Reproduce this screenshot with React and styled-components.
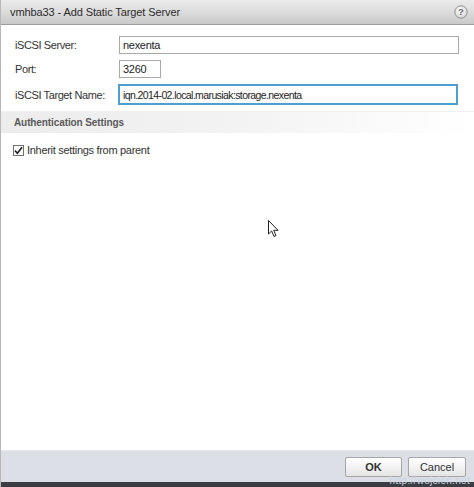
import React from "react";
import styled, { createGlobalStyle } from "styled-components";

const GlobalStyle = createGlobalStyle`
	html, body {
		margin: 0;
		padding: 0;
		background: #ffffff;
	}
	body {
		font-family: "Liberation Sans", Arial, sans-serif;
		font-size: 11px;
		color: #333333;
	}
`;

const Dialog = styled.div`
	position: relative;
	width: 474px;
	height: 487px;
	display: flex;
	flex-direction: column;
	box-sizing: border-box;
	border-left: 1px solid #b8b8b8;
	overflow: hidden;
`;

const TitleBar = styled.div`
	height: 24px;
	display: flex;
	align-items: center;
	justify-content: space-between;
	padding: 0 6px 0 9px;
	background: linear-gradient( to bottom, #ebebeb 0%, #dcdcdc 50%, #c9c9c9 100% );
	border-bottom: 1px solid #9c9c9c;
	flex-shrink: 0;
`;

const Title = styled.span`
	font-size: 11px;
	color: #2b2b2b;
	letter-spacing: -0.1px;
`;

const Body = styled.div`
	flex: 1;
	display: flex;
	flex-direction: column;
	padding-top: 11px;
`;

const Form = styled.div`
	display: grid;
	grid-template-columns: 103px 1fr;
	row-gap: 6px;
	align-items: center;
	padding: 0 16px 0 14px;
`;

const Label = styled.label`
	font-size: 11px;
	letter-spacing: -0.4px;
	color: #333333;
`;

const Field = styled.input`
	box-sizing: border-box;
	height: ${ props => props.focused ? "21px" : "18px" };
	width: ${ props => props.width || "100%" };
	margin-left: ${ props => props.focused ? "0" : "1px" };
	padding: 0 3px;
	font-family: "Liberation Sans", Arial, sans-serif;
	font-size: ${ props => props.focused ? "10.5px" : "11px" };
	letter-spacing: ${ props => props.focused ? "-0.6px" : "-0.3px" };
	color: #222222;
	background: #ffffff;
	border: ${ props => props.focused ? "2px solid #4b9fd3" : "1px solid #a9a9a9" };
	border-radius: 0;
	outline: none;
`;

const SectionHeader = styled.div`
	margin-top: 6px;
	height: 21px;
	display: flex;
	align-items: center;
	padding-left: 13px;
	font-size: 10px;
	font-weight: bold;
	letter-spacing: -0.1px;
	color: #5a5a5a;
	background: linear-gradient( to right, #ececec 0%, #f3f3f3 50%, #ffffff 100% );
	border-top: 1px solid #f0f0f0;
`;

const CheckRow = styled.label`
	display: flex;
	align-items: center;
	gap: 3px;
	margin-top: 11px;
	padding-left: 12px;
	font-size: 11px;
	letter-spacing: -0.3px;
	color: #333333;
`;

const CheckBox = styled.span`
	width: 11px;
	height: 11px;
	box-sizing: border-box;
	border: 1px solid #707070;
	background: #fbfbfb;
	display: flex;
	align-items: center;
	justify-content: center;
`;

const Footer = styled.div`
	position: relative;
	height: 31px;
	flex-shrink: 0;
	display: flex;
	align-items: center;
	justify-content: flex-end;
	gap: 6px;
	padding-right: 8px;
	background: #dcdfe5;
	border-top: 1px solid #e6e8ec;
`;

const Button = styled.button`
	width: ${ props => props.wide ? "58px" : "57px" };
	height: 20px;
	padding: 0;
	font-family: "Liberation Sans", Arial, sans-serif;
	font-size: 11px;
	font-weight: ${ props => props.primary ? "bold" : "normal" };
	color: #333333;
	background: linear-gradient( to bottom, #ffffff 0%, #f2f2f2 55%, #e4e4e4 100% );
	border: 1px solid #a5a5a5;
	border-radius: 2px;
`;

const Watermark = styled.span`
	position: absolute;
	right: 4px;
	bottom: -4px;
	font-size: 10px;
	color: #c9d5e3;
	letter-spacing: 0.3px;
`;

const BottomEdge = styled.div`
	height: 5px;
	flex-shrink: 0;
	background: #3b3d42;
`;

const Pointer = styled.svg`
	position: absolute;
	left: 267px;
	top: 220px;
`;

const HelpIcon = () => (
	<svg width="14" height="14" viewBox="0 0 14 14">
		<defs>
			<radialGradient id="help-fill" cx="45%" cy="35%" r="70%">
				<stop offset="0%" stopColor="#ffffff" />
				<stop offset="100%" stopColor="#d2d2d2" />
			</radialGradient>
		</defs>
		<circle cx="7" cy="7" r="6.2" fill="url(#help-fill)" stroke="#8e8e8e" strokeWidth="1" />
		<text x="7" y="10.4" textAnchor="middle" fontSize="9.5" fontWeight="bold" fontFamily="Liberation Sans, Arial, sans-serif" fill="#6a6a6a">?</text>
	</svg>
);

const Tick = () => (
	<svg width="9" height="9" viewBox="0 0 9 9">
		<path d="M1 4.6 L3.4 7.2 L8 1.2" fill="none" stroke="#1e1e1e" strokeWidth="1.6" />
	</svg>
);

export default function App() {
	return <>
		<GlobalStyle />
		<Dialog>
			<TitleBar>
				<Title>vmhba33 - Add Static Target Server</Title>
				<HelpIcon />
			</TitleBar>
			<Body>
				<Form>
					<Label>iSCSI Server:</Label>
					<Field defaultValue="nexenta" />
					<Label>Port:</Label>
					<Field defaultValue="3260" width="42px" />
					<Label>iSCSI Target Name:</Label>
					<Field focused defaultValue="iqn.2014-02.local.marusiak:storage.nexenta" />
				</Form>
				<SectionHeader>Authentication Settings</SectionHeader>
				<CheckRow>
					<CheckBox><Tick /></CheckBox>
					Inherit settings from parent
				</CheckRow>
			</Body>
			<Footer>
				<Button primary>OK</Button>
				<Button wide>Cancel</Button>
				<Watermark>http://wojcieh.net</Watermark>
			</Footer>
			<BottomEdge />
			<Pointer width="12" height="18" viewBox="0 0 12 18">
				<path d="M0.5 0.5 L0.5 14 L3.6 11 L6 16.5 L8 15.6 L5.7 10.3 L10 10.3 Z" fill="#ffffff" stroke="#222222" strokeWidth="1" />
			</Pointer>
		</Dialog>
	</>;
}
